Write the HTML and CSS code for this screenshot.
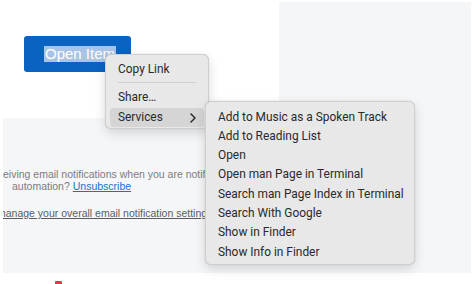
FILE: index.html
```html
<!DOCTYPE html>
<html>
<head>
<meta charset="utf-8">
<link rel="stylesheet" href="styles.css">
</head>
<body>
<div class="page">
  <div class="email">
    <div class="hero">
      <a class="btn"><span class="sel">Open Item</span></a>
    </div>
    <div class="footer">
      <p class="line l1">receiving email notifications when you are notified by</p>
      <p class="line l2">automation? <a class="unsub">Unsubscribe</a></p>
      <p class="line l3"><a class="manage">manage your overall email notification settings</a></p>
    </div>
  </div>
  <div class="logo-peek"></div>

  <div class="menu menu-main">
    <div class="item">Copy Link</div>
    <div class="sep"></div>
    <div class="item">Share…</div>
    <div class="item active">Services
      <svg class="chev" width="6" height="10" viewBox="0 0 6 10"><path d="M1 1 L5 5 L1 9" fill="none" stroke="#2a2a2a" stroke-width="1.5" stroke-linecap="round" stroke-linejoin="round"/></svg>
    </div>
  </div>

  <div class="menu menu-sub">
    <div class="item">Add to Music as a Spoken Track</div>
    <div class="item">Add to Reading List</div>
    <div class="item">Open</div>
    <div class="item">Open man Page in Terminal</div>
    <div class="item">Search man Page Index in Terminal</div>
    <div class="item">Search With Google</div>
    <div class="item">Show in Finder</div>
    <div class="item">Show Info in Finder</div>
  </div>
</div>
</body>
</html>
```
FILE: styles.css
```css
html, body {
  margin: 0;
  padding: 0;
  background: #ffffff;
}
.page {
  position: relative;
  width: 474px;
  height: 284px;
  overflow: hidden;
  font-family: "Liberation Sans", Arial, sans-serif;
}
.email {
  margin: 2px 3px 0 3px;
  height: 271px;
  background: #f5f6f8;
  overflow: hidden;
}
.hero {
  width: 276px;
  height: 116px;
  background: #ffffff;
  padding: 34px 0 0 21px;
  box-sizing: border-box;
}
.btn {
  display: flex;
  align-items: center;
  justify-content: flex-start;
  box-sizing: border-box;
  width: 107px;
  height: 36px;
  padding-left: 20px;
  background: #0b63c1;
  border-radius: 3px;
  color: #ffffff;
  font-size: 15px;
  white-space: nowrap;
  overflow: hidden;
}
.sel {
  background: #a8c4e8;
  color: #ffffff;
  line-height: 16px;
  padding: 0 1px;
}
.footer {
  padding-top: 50px;
  color: #7c7c80;
  font-size: 10.5px;
}
.line {
  margin: 0;
  white-space: nowrap;
  line-height: 12px;
}
.l1 { margin-left: -14.6px; }
.l2 { margin-left: 9px; }
.l3 { margin-left: -6px; margin-top: 15px; }
.unsub {
  color: #1a6fd6;
  text-decoration: underline;
}
.manage {
  color: #5c5c60;
  text-decoration: underline;
}
.logo-peek {
  width: 7px;
  height: 4px;
  margin: 8px 0 0 55px;
  background: #e0374c;
  border-radius: 1px 1px 0 0;
}
.menu {
  position: absolute;
  box-sizing: border-box;
  background: #e8e8e8;
  border: 1px solid #cfcfcf;
  border-radius: 6px;
  box-shadow: 0 4px 12px rgba(0, 0, 0, 0.14), 0 0 1px rgba(0, 0, 0, 0.2);
  font-family: Roboto, "Liberation Sans", sans-serif;
  font-size: 11.9px;
  color: #2a2a2a;
}
.menu-main {
  left: 105px;
  top: 54px;
  width: 104px;
  height: 75px;
  padding: 4.5px 4px 0 4px;
}
.menu-sub {
  left: 205px;
  top: 101px;
  width: 210px;
  height: 164px;
  padding: 5.5px 4px 0 4px;
}
.item {
  position: relative;
  height: 19.3px;
  line-height: 19.3px;
  padding-left: 8px;
  border-radius: 4px;
  white-space: nowrap;
}
.menu-main .item { height: 19.5px; line-height: 19.5px; }
.sep {
  height: 1px;
  margin: 3px 8px 5px 8px;
  background: #d0d0d0;
}
.active {
  background: #d5d5d5;
}
.chev {
  position: absolute;
  right: 8px;
  top: 5px;
}
```
